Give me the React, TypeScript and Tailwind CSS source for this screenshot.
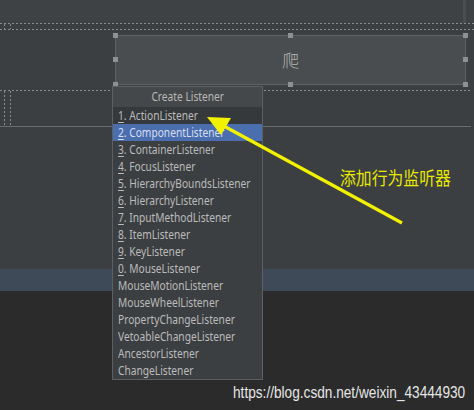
import React from "react";

const items: [string | null, string][] = [
  ["1", "ActionListener"],
  ["2", "ComponentListener"],
  ["3", "ContainerListener"],
  ["4", "FocusListener"],
  ["5", "HierarchyBoundsListener"],
  ["6", "HierarchyListener"],
  ["7", "InputMethodListener"],
  ["8", "ItemListener"],
  ["9", "KeyListener"],
  ["0", "MouseListener"],
  [null, "MouseMotionListener"],
  [null, "MouseWheelListener"],
  [null, "PropertyChangeListener"],
  [null, "VetoableChangeListener"],
  [null, "AncestorListener"],
  [null, "ChangeListener"],
];

function HDash() {
  return <div className="h-px bg-[repeating-linear-gradient(90deg,#8b8e91_0_2px,transparent_2px_4px)]" />;
}
function VDash() {
  return <div className="w-px h-full bg-[repeating-linear-gradient(180deg,#8b8e91_0_2px,transparent_2px_4px)]" />;
}

function Handle({ cls }: { cls: string }) {
  return <div className={"absolute w-[5px] h-[5px] bg-[#8e9092] " + cls} />;
}

export default function App() {
  return (
    <div className="w-[474px] h-[410px] relative overflow-hidden bg-[#3c3f41] flex flex-col font-['Noto_Sans',sans-serif]">
      {/* top band */}
      <div className="h-[23px] bg-[#3f4244] flex">
        <div className="w-[463px]" />
        <div className="w-[3px] bg-[#4b4e51]" />
      </div>
      {/* double dashed lines */}
      <div className="h-[7px] flex flex-col">
        <HDash />
        <div className="flex-1 flex pl-[4px] gap-[5px]">
          <VDash />
          <VDash />
        </div>
        <HDash />
      </div>
      {/* button area */}
      <div className="h-[60px] pl-[115px] pt-[5px]">
        <div className="relative w-[351px] h-[50px] border border-[#5f6264] bg-[#4a4d4f] flex items-center justify-center">
          <span className="text-[17px] text-[#b4b4b4] font-light font-['Noto_Sans_CJK_SC',sans-serif]">爬</span>
          <Handle cls="-left-[3px] -top-[3px]" />
          <Handle cls="left-[172px] -top-[3px]" />
          <Handle cls="-right-[3px] -top-[3px]" />
          <Handle cls="-left-[3px] top-[21px]" />
          <Handle cls="-right-[3px] top-[21px]" />
          <Handle cls="-left-[3px] -bottom-[3px]" />
          <Handle cls="left-[172px] -bottom-[3px]" />
          <Handle cls="-right-[3px] -bottom-[3px]" />
        </div>
      </div>
      {/* dashed row */}
      <div className="h-[37px] flex flex-col w-[471px]">
        <HDash />
        <div className="flex-1 flex pl-[4px] gap-[5px]">
          <VDash />
          <VDash />
        </div>
        <div className="h-px bg-[#6a6d70]" />
      </div>
      <div className="h-[142px]" />
      <div className="h-[22px] bg-[#3e4a58]" />
      <div className="flex-1 bg-[#2b2b2b] flex justify-end items-end pb-[7px] pr-[9px]">
        <span className="text-[16px] leading-[20px] text-[#e6e6e6] font-['Liberation_Sans',Arial,sans-serif] inline-block scale-x-[0.853] origin-right whitespace-nowrap">
          https://blog.csdn.net/weixin_43444930
        </span>
      </div>

      {/* popup */}
      <div className="absolute left-[112px] top-[86px] w-[151px] border border-[#5d6063] bg-[#3c3f41] text-[#bbbbbb]">
        <div className="h-[20px] bg-[#45484a] flex items-center justify-center">
          <span className="text-[12px] inline-block scale-x-[0.85] whitespace-nowrap text-[#b8b8b8]">Create Listener</span>
        </div>
        {items.map(([n, label], i) => (
          <div
            key={label}
            className={
              "h-[17px] flex items-center pl-[5px] whitespace-nowrap " +
              (i === 1 ? "bg-[#4b6eaf] text-[#d6deee]" : i === 0 ? "bg-[#36393b]" : "")
            }
          >
            <span className="text-[12px] inline-block scale-x-[0.85] origin-left">
              {n !== null ? (
                <>
                  <span className="underline underline-offset-2">{n}</span>. {label}
                </>
              ) : (
                label
              )}
            </span>
          </div>
        ))}
      </div>

      {/* annotation arrow */}
      <svg className="absolute left-0 top-0 pointer-events-none" width="474" height="410" viewBox="0 0 474 410">
        <line x1="402" y1="223" x2="222" y2="125" stroke="#f2f200" strokeWidth="3.2" />
        <polygon points="207,117 231,118 221,135" fill="#f2f200" />
      </svg>
      <div className="absolute left-[340px] top-[166px] text-[18px] leading-[22px] text-[#e8e800] font-['Noto_Sans_CJK_SC',sans-serif] inline-block scale-x-[0.88] origin-left whitespace-nowrap">
        添加行为监听器
      </div>
    </div>
  );
}
